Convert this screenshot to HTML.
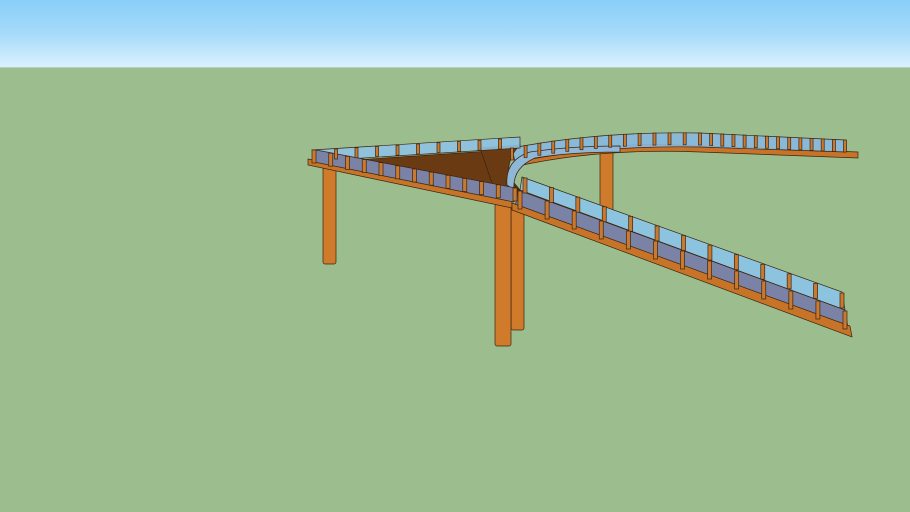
<!DOCTYPE html>
<html><head><meta charset="utf-8"><style>
html,body{margin:0;padding:0;width:910px;height:512px;overflow:hidden;background:#9cbd8e}
svg{display:block}
</style></head><body>
<svg id="s" width="910" height="512" viewBox="0 0 910 512" xmlns="http://www.w3.org/2000/svg">
<defs>
<linearGradient id="sky" x1="0" y1="0" x2="0" y2="1">
<stop offset="0" stop-color="#89cef9"/><stop offset="0.5" stop-color="#a6dafa"/><stop offset="1" stop-color="#daf1fe"/>
</linearGradient>
</defs>
<rect x="0" y="0" width="910" height="67" fill="url(#sky)"/>
<rect x="0" y="67" width="910" height="1" fill="#b5d3bd"/>
<rect x="0" y="68" width="910" height="444" fill="#9cbd8e"/>
<g stroke="#3a2410" stroke-width="0.7">
<rect x="323" y="166" width="13" height="98" fill="#d07a2c" rx="2"/>
<rect x="600" y="148" width="13" height="62" fill="#d07a2c"/>
<rect x="511" y="208" width="13" height="122" fill="#d07a2c" rx="2"/>
<rect x="495" y="204" width="16" height="142" fill="#d07a2c" rx="2"/>
<path d="M515,160 Q600,140 700,146 L858,152 L858,158 L700,152 Q600,148 518,166 Z" fill="#c77428"/>
<path d="M512,148 Q600,131 700,133 L845,140 L845,152 L700,147 Q600,145 515,162 Z" fill="#88b8e0" fill-opacity="0.9"/>
<path d="M355,160 L505,150 Q500,160 510,178 L520,190 L470,185 Z" fill="#6a3a12"/>
<path d="M480,148 L520,145 Q505,160 510,180 L520,192 L495,192 Z" fill="#6a3a12"/>
<path d="M507,185 Q505,160 530,152 Q570,146 620,146 L620,152 Q570,152 535,158 Q512,168 514,190 Z" fill="#8fb8d8"/>
<path d="M312,150 L520,137 L520,148 L316,161 Z" fill="#8fc2e4" fill-opacity="0.9"/>
<path d="M308,159 L512,201 L512,208 L308,165 Z" fill="#c77428"/>
<path d="M316,150 L516,188 L514,202 L314,162 Z" fill="#7a82a6"/>
<path d="M522,177 L842,292 L845,310 L520,190 Z" fill="#8cc4e0"/>
<path d="M518,190 L845,310 L848,328 L515,208 Z" fill="#7a82a6"/>
<path d="M512,203 L850,326 L852,337 L512,210 Z" fill="#c77428"/>
<g id="bal" fill="#c97a2e"></g>
</g>
<script>
var g=document.getElementById('bal');
function bal(x1,y1,x2,y2,n,h,w){for(var i=0;i<=n;i++){var t=i/n,x=x1+(x2-x1)*t,y=y1+(y2-y1)*t;var r=document.createElementNS('http://www.w3.org/2000/svg','rect');r.setAttribute('x',x-w/2);r.setAttribute('y',y);r.setAttribute('width',w);r.setAttribute('height',h);g.appendChild(r);}}
bal(314,150,515,188,12,13,4);
bal(336,149,500,139,8,10,3);
bal(525,178,842,293,12,15,4);
bal(520,191,845,311,12,18,4);
function curve(n){for(var i=0;i<=n;i++){var t=i/n,x,y;if(t<0.5){var u=t*2;x=(1-u)*(1-u)*512+2*(1-u)*u*600+u*u*700;y=(1-u)*(1-u)*148+2*(1-u)*u*131+u*u*133;}else{var u=(t-0.5)*2;x=700+145*u;y=133+7*u;}
var r=document.createElementNS('http://www.w3.org/2000/svg','rect');r.setAttribute('x',x-1.5);r.setAttribute('y',y);r.setAttribute('width',3);r.setAttribute('height',12);g.appendChild(r);}}
curve(26);
</script>
</svg>
</body></html>
